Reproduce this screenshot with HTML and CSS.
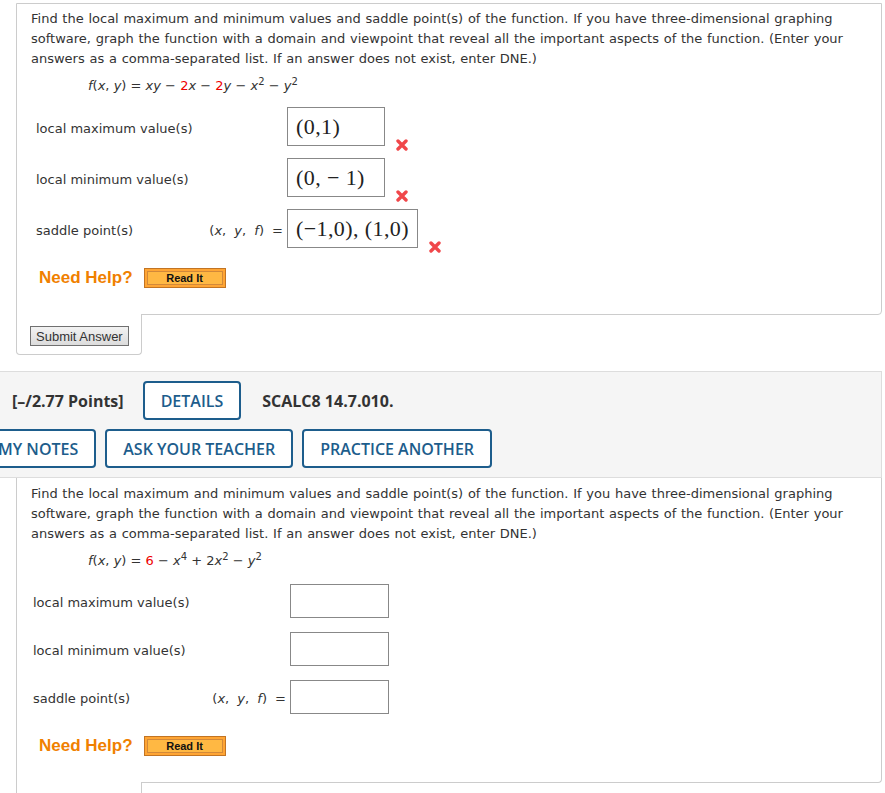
FILE: index.html
```html
<!DOCTYPE html>
<html lang="en">
<head>
  <meta charset="UTF-8">
  <title>SCALC8 14.7</title>
  <link rel="stylesheet" href="styles.css">
</head>
<body>
  <!-- previous question -->
  <div class="question first">
    <div class="qbox">
      <p class="prompt">Find the local maximum and minimum values and saddle point(s) of the function. If you have three-dimensional graphing software, graph the function with a domain and viewpoint that reveal all the important aspects of the function. (Enter your answers as a comma-separated list. If an answer does not exist, enter DNE.)</p>
      <div class="formula"><i>f</i>(<i>x</i>, <i>y</i>) = <i>xy</i> − <span class="red">2</span><i>x</i> − <span class="red">2</span><i>y</i> − <i>x</i><sup>2</sup> − <i>y</i><sup>2</sup></div>
      <div class="answers">
        <div class="label">local maximum value(s)</div>
        <div class="prefix"></div>
        <div class="cell">
          <span class="box math">(0,1)</span>
          <svg class="wrong" viewBox="0 0 12 12"><path d="M2 2L10 10M10 2L2 10"/></svg>
        </div>

        <div class="label">local minimum value(s)</div>
        <div class="prefix"></div>
        <div class="cell">
          <span class="box math">(0, − 1)</span>
          <svg class="wrong" viewBox="0 0 12 12"><path d="M2 2L10 10M10 2L2 10"/></svg>
        </div>

        <div class="label">saddle point(s)</div>
        <div class="prefix">(<i>x</i>, <i>y</i>, <i>f</i>) =</div>
        <div class="cell">
          <span class="box math">(−1,0), (1,0)</span>
          <svg class="wrong" viewBox="0 0 12 12"><path d="M2 2L10 10M10 2L2 10"/></svg>
        </div>
      </div>
      <div class="help">
        <span class="need">Need Help?</span>
        <button class="read-it">Read It</button>
      </div>
    </div>
    <div class="submit-tab">
      <button class="submit">Submit Answer</button>
    </div>
  </div>

  <!-- header of next question -->
  <div class="qheader">
    <div class="qheader-row">
      <span class="points">[–/2.77 Points]</span>
      <button class="blue-btn">DETAILS</button>
      <span class="code">SCALC8 14.7.010.</span>
    </div>
    <div class="qheader-row tools">
      <button class="blue-btn">MY NOTES</button>
      <button class="blue-btn">ASK YOUR TEACHER</button>
      <button class="blue-btn">PRACTICE ANOTHER</button>
    </div>
  </div>

  <div class="question second">
    <div class="qbox">
      <p class="prompt">Find the local maximum and minimum values and saddle point(s) of the function. If you have three-dimensional graphing software, graph the function with a domain and viewpoint that reveal all the important aspects of the function. (Enter your answers as a comma-separated list. If an answer does not exist, enter DNE.)</p>
      <div class="formula"><i>f</i>(<i>x</i>, <i>y</i>) = <span class="red">6</span> − <i>x</i><sup>4</sup> + 2<i>x</i><sup>2</sup> − <i>y</i><sup>2</sup></div>
      <div class="answers empty">
        <div class="label">local maximum value(s)</div>
        <div class="prefix"></div>
        <div class="cell"><span class="box"></span></div>

        <div class="label">local minimum value(s)</div>
        <div class="prefix"></div>
        <div class="cell"><span class="box"></span></div>

        <div class="label">saddle point(s)</div>
        <div class="prefix">(<i>x</i>, <i>y</i>, <i>f</i>) =</div>
        <div class="cell"><span class="box"></span></div>
      </div>
      <div class="help">
        <span class="need">Need Help?</span>
        <button class="read-it">Read It</button>
      </div>
    </div>
    <div class="submit-tab"></div>
  </div>
</body>
</html>
```

FILE: styles.css
```css
/* base */
body {
  margin: 0;
  padding: 3px 3px 0 0;
  background: #fff;
  color: #333;
  font-family: "DejaVu Sans", Verdana, sans-serif;
  font-size: 13px;
}

button {
  font-family: inherit;
  cursor: pointer;
}

/* question card */
.question {
  margin-left: 16px;
}

.qbox {
  border: 1px solid #ccc;
  border-radius: 0 0 4px 0;
  padding: 5px 14px 26px 14px;
  background: #fff;
}

.second .qbox {
  border-top: none;
  padding-top: 6px;
}

.prompt {
  margin: 0;
  line-height: 20px;
  word-spacing: 0.6px;
}

.formula {
  margin: 7px 0 0 57px;
  line-height: 20px;
}

.formula sup {
  font-size: 10px;
  line-height: 0;
  vertical-align: 5px;
}

.red {
  color: #e00;
}

/* answer rows */
.answers {
  display: grid;
  grid-template-columns: 170px 81px auto;
  row-gap: 12px;
  align-items: center;
  margin: 11px 0 0 5px;
}

.answers.empty {
  grid-template-columns: 170px 87px auto;
  row-gap: 14px;
  margin: 13px 0 0 2px;
}

.label {
  padding-top: 3px;
}

.prefix {
  text-align: right;
  padding: 3px 4px 0 0;
  white-space: nowrap;
  word-spacing: 4px;
}

.cell {
  display: flex;
  align-items: flex-end;
}

.box {
  display: inline-block;
  box-sizing: border-box;
  min-width: 98px;
  height: 39px;
  border: 1px solid #888;
  background: #fff;
}

.empty .box {
  width: 99px;
  height: 34px;
}

.math {
  font-family: "Liberation Serif", "Times New Roman", serif;
  font-size: 22px;
  line-height: 37px;
  letter-spacing: 0.4px;
  color: #222;
  padding: 0 8px;
  white-space: nowrap;
}

.wrong {
  width: 12px;
  height: 12px;
  margin: 0 0 -5px 11px;
}

.wrong path {
  stroke: #f0474a;
  stroke-width: 3.4;
  stroke-linecap: round;
  fill: none;
}

/* need help */
.help {
  display: flex;
  align-items: center;
  gap: 11px;
  margin: 20px 0 0 8px;
}

.second .help {
  margin-top: 22px;
}

.need {
  font-family: "Liberation Sans", Arial, sans-serif;
  font-weight: bold;
  font-size: 17px;
  color: #f08000;
}

.read-it {
  width: 82px;
  height: 20px;
  padding: 0;
  border: 1px solid #c27423;
  background: #ffb843;
  box-shadow: inset 0 0 0 2px #ffa534, inset 0 0 0 3px #d2893a;
  font-family: "Liberation Sans", Arial, sans-serif;
  font-weight: bold;
  font-size: 11px;
  color: #111;
}

/* submit tab under card */
.submit-tab {
  box-sizing: border-box;
  width: 126px;
  height: 41px;
  margin-top: -1px;
  padding: 12px 0 0 13px;
  border: 1px solid #ccc;
  border-top: none;
  border-radius: 0 0 4px 4px;
  background: #fff;
}

.submit {
  height: 20px;
  padding: 0 5px;
  border: 1px solid #707070;
  background: linear-gradient(#f2f2f2, #dcdcdc);
  font-family: "Liberation Sans", Arial, sans-serif;
  font-size: 13px;
  color: #333;
}

/* next question header band */
.qheader {
  margin: 16px 0 0 -30px;
  padding: 9px 0 9px 0;
  background: #f5f5f5;
  border: 1px solid #ddd;
  display: flex;
  flex-direction: column;
  gap: 9px;
  font-family: "Open Sans", sans-serif;
  font-size: 16px;
}

.qheader-row {
  display: flex;
  align-items: center;
  gap: 21px;
  padding-left: 41px;
}

.points {
  margin-right: -2px;
}

.qheader-row.tools {
  gap: 9px;
  padding-left: 9px;
}

.points,
.code {
  font-weight: 700;
  color: #333;
}

.blue-btn {
  box-sizing: border-box;
  height: 39px;
  padding: 0 16px;
  border: 2px solid #1d5d8c;
  border-radius: 4px;
  background: #fff;
  color: #1d5d8c;
  font-family: "Open Sans", sans-serif;
  font-weight: 600;
  font-size: 16px;
}
```
